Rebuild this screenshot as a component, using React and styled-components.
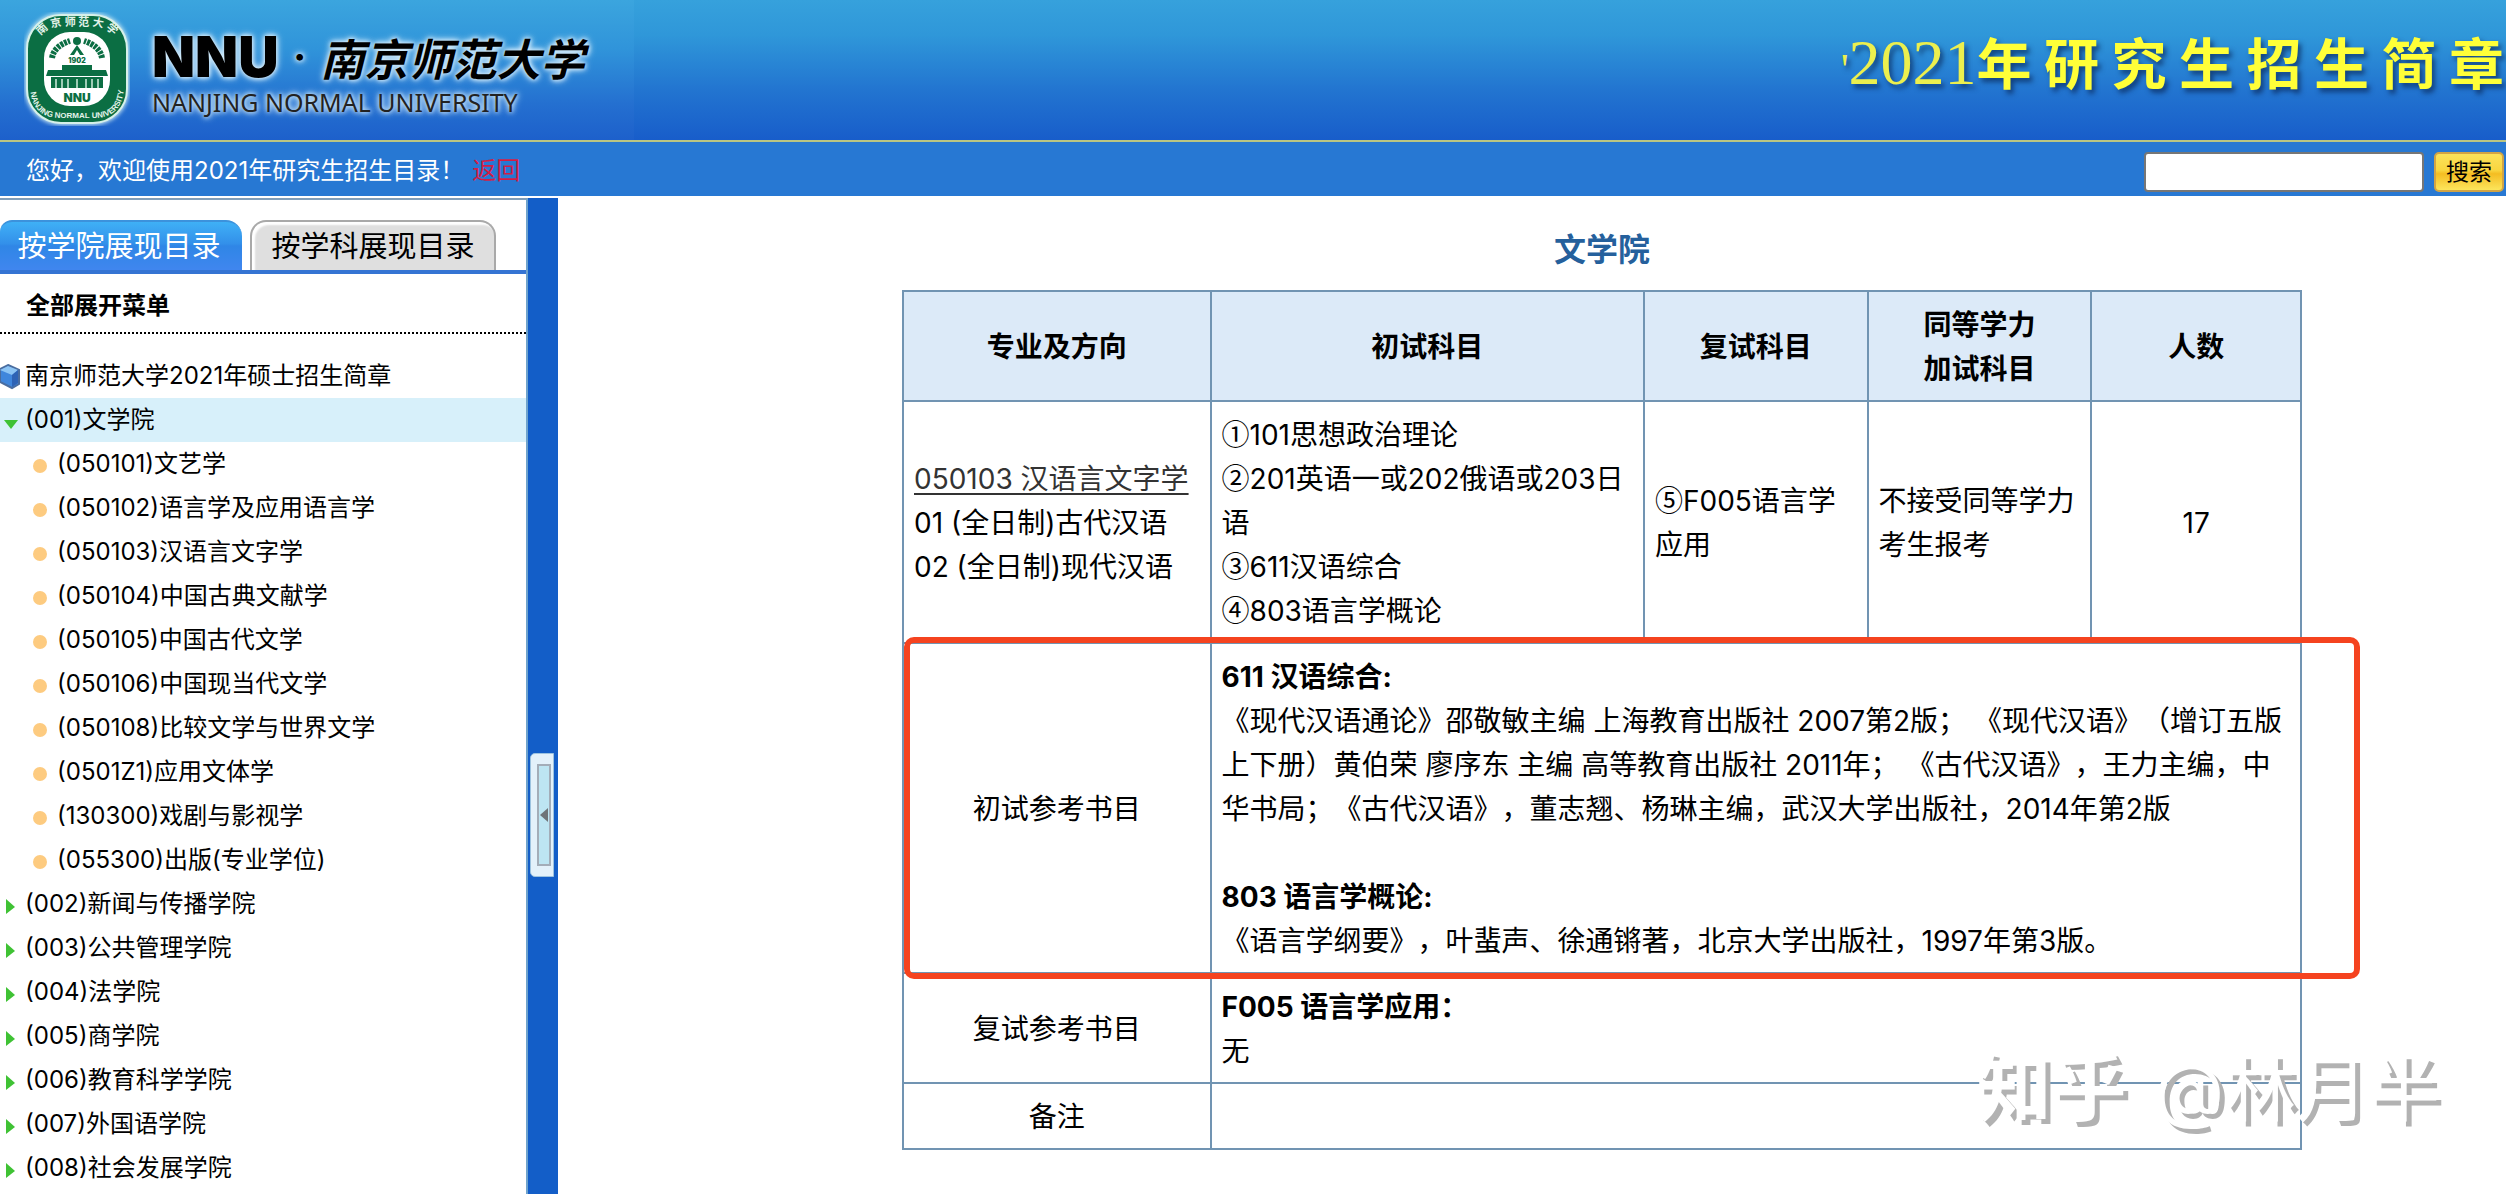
import React, { useState } from "react";
import styled, { createGlobalStyle, css } from "styled-components";

const sans = `Inter, "Noto Sans CJK SC", sans-serif`;

const Global = createGlobalStyle`
  * { box-sizing: border-box; }
  body {
    margin: 0;
    background: #fff;
    color: #000;
    font-family: ${sans};
    font-size: 24px;
    text-spacing-trim: space-all;
  }
`;

const Page = styled.div`
  height: 100vh;
  display: flex;
  flex-direction: column;
  overflow: hidden;
`;

const Banner = styled.header`
  flex: none;
  height: 142px;
  display: flex;
  justify-content: space-between;
  align-items: flex-start;
  background: linear-gradient(#36a1dc, #2f97d9 25%, #2274d0 65%, #185dca);
  border-bottom: 2px solid #b9c583;
`;

const Brand = styled.div`
  width: 634px;
  height: 140px;
  padding: 12px 0 0 24px;
  display: flex;
  gap: 22px;
  background: linear-gradient(#3ba5de, #3094da 35%, #246fd0 75%, #1d60cb);
`;

const BrandText = styled.div`
  padding-top: 12px;
  white-space: nowrap;
  text-shadow: 0 0 4px #d5ecfb, 0 0 6px #d5ecfb, 0 0 8px #a9d5f3;
`;

const BrandMain = styled.div`
  display: flex;
  align-items: center;
  height: 66px;
  line-height: 66px;
`;

const Initials = styled.span`
  font: 900 56px/66px Inter, sans-serif;
`;

const Separator = styled.span`
  width: 42px;
  text-align: center;
  font-size: 40px;
  font-weight: bold;
`;

const ChineseName = styled.span`
  font: italic bold 44px/66px "Noto Sans CJK SC", sans-serif;
`;

const EnglishName = styled.div`
  font: 400 25px/24px "Noto Sans", sans-serif;
  color: #222;
`;

const BannerTitle = styled.h1`
  margin: 0;
  padding: 20px 2px 0 0;
  display: flex;
  align-items: baseline;
  color: #ffff38;
  font: bold 55px/80px "Noto Sans CJK SC", sans-serif;
  white-space: nowrap;
  text-shadow: 3px 4px 5px rgba(10, 40, 90, 0.7);
`;

const Year = styled.span`
  font: 400 64px/80px "Liberation Serif", serif;
  color: #ecef4e;
`;

const Tick = styled.span`
  font-size: 44px;
`;

const Toolbar = styled.div`
  flex: none;
  height: 54px;
  padding: 0 2px 2px 26px;
  display: flex;
  align-items: center;
  justify-content: space-between;
  background: #2778d3;
  color: #fff;
`;

const BackLink = styled.a`
  margin-left: 8px;
  color: #d31c46;
  text-decoration: none;
`;

const SearchForm = styled.form`
  display: flex;
  align-items: center;
  gap: 10px;
  padding-top: 8px;
`;

const SearchInput = styled.input`
  width: 280px;
  height: 40px;
  padding: 0 8px;
  border: 2px solid #767676;
  border-radius: 4px;
  background: #fff;
  font: 24px ${sans};
`;

const SearchButton = styled.button`
  width: 70px;
  height: 40px;
  padding: 0;
  border: 2px solid #d2a444;
  border-radius: 5px;
  background: linear-gradient(#fbe25a, #f9d640 45%, #f4bd22 55%, #fce55c);
  color: #000;
  font: 23px/30px ${sans};
`;

const Body = styled.div`
  flex: 1;
  min-height: 0;
  display: flex;
  padding-top: 2px;
`;

const Sidebar = styled.nav`
  flex: none;
  width: 528px;
  overflow: hidden;
  border-top: 2px solid #7f9db9;
  border-right: 2px solid #6fa3cd;
`;

const Tabs = styled.div`
  display: flex;
  gap: 8px;
  padding-top: 20px;
  border-bottom: 4px solid #3574d3;
`;

const Tab = styled.button`
  height: 50px;
  padding: 2px 0 0;
  font: 29px/46px ${sans};
  border: 0;
  ${({ $active }) =>
    $active
      ? css`
          width: 242px;
          padding-right: 4px;
          border-radius: 12px 16px 0 0;
          border-top: 2px solid #3c92dc;
          background: linear-gradient(#3fb0f6, #3390ea 45%, #2f86e6 50%, #4086ef);
          color: #fff;
        `
      : css`
          width: 246px;
          border: 2px solid #a9a9a9;
          border-bottom: 0;
          border-radius: 16px 16px 0 0;
          background: #dfdfdf;
          box-shadow: inset 3px 3px 2px #fff;
          color: #000;
        `}
`;

const ExpandAll = styled.button`
  display: block;
  width: 100%;
  height: 60px;
  padding: 6px 0 0 26px;
  border: 0;
  border-bottom: 2px dotted #000;
  background: none;
  font: bold 24px/44px ${sans};
  text-align: left;
`;

const Tree = styled.ul`
  margin: 0;
  padding: ${({ $nested }) => ($nested ? "0" : "20px 0 0")};
  list-style: none;
`;

const Node = styled.a`
  display: flex;
  align-items: center;
  height: 44px;
  padding-left: ${({ $nested }) => ($nested ? "32px" : "0")};
  background: ${({ $active }) => ($active ? "#d7f0fa" : "transparent")};
  color: #000;
  line-height: 44px;
  text-decoration: none;
  white-space: nowrap;
`;

const Marker = styled.svg`
  flex: none;
  width: 25px;
  height: 44px;
`;

const Divider = styled.div`
  flex: none;
  width: 30px;
  padding: 555px 0 0 2px;
  background: #135ec8;
`;

const Handle = styled.button`
  width: 24px;
  height: 124px;
  padding: 10px 2px 10px 6px;
  display: flex;
  border: 1px solid #9cc3e0;
  border-radius: 5px 0 0 5px;
  background: #e3f1fa;
`;

const Grip = styled.span`
  flex: 1;
  align-self: stretch;
  display: flex;
  align-items: center;
  justify-content: center;
  border: 2px solid #a3adb8;
  background: #bde5f2;
`;

const Main = styled.main`
  flex: 1;
  min-width: 0;
  padding: 22px 0 0 140px;
  display: flex;
  flex-direction: column;
  align-items: center;
`;

const Heading = styled.h2`
  margin: 0 0 10px;
  color: #25609c;
  font: bold 32px/60px ${sans};
`;

const TableFrame = styled.div`
  position: relative;
  width: 1400px;
  max-width: 100%;
`;

const Table = styled.table`
  width: 100%;
  table-layout: fixed;
  border-collapse: collapse;
  font-size: 28px;
  line-height: 44px;
`;

const cell = css`
  padding: 11px 10px 9px;
  border: 2px solid #7194b2;
  white-space: nowrap;
`;

const Th = styled.th`
  ${cell}
  background: #dceaf8;
  font-weight: bold;
`;

const Td = styled.td`
  ${cell}
  text-align: ${({ $center }) => ($center ? "center" : "left")};
  height: 66px;
`;

const Circled = styled.span`
  font-family: "Noto Sans CJK SC", sans-serif;
  line-height: 1;
`;

const MajorLink = styled.a`
  color: #333;
  text-decoration: underline;
  text-decoration-thickness: 2px;
  text-underline-offset: 4px;
`;

const Highlight = styled.div`
  position: absolute;
  left: 2px;
  top: 347px;
  width: 1456px;
  height: 342px;
  border: 6px solid #f5431f;
  border-radius: 10px;
  pointer-events: none;
`;

const Watermark = styled.div`
  position: absolute;
  right: 66px;
  bottom: 55px;
  display: flex;
  align-items: baseline;
  gap: 28px;
  color: #fff;
  font: 72px/100px ${sans};
  text-shadow: 5px 5px 0 #b2b2b2;
  white-space: nowrap;
`;

const WatermarkLogo = styled.span`
  font-size: 75px;
  font-weight: bold;
`;

const children = [
  "(050101)文艺学",
  "(050102)语言学及应用语言学",
  "(050103)汉语言文字学",
  "(050104)中国古典文献学",
  "(050105)中国古代文学",
  "(050106)中国现当代文学",
  "(050108)比较文学与世界文学",
  "(0501Z1)应用文体学",
  "(130300)戏剧与影视学",
  "(055300)出版(专业学位)",
];

const colleges = [
  "(002)新闻与传播学院",
  "(003)公共管理学院",
  "(004)法学院",
  "(005)商学院",
  "(006)教育科学学院",
  "(007)外国语学院",
  "(008)社会发展学院",
];

const Emblem = () => (
  <svg width="106" height="114" viewBox="0 0 106 114" aria-hidden="true">
    <defs>
      <path id="arcTop" d="M13 50V40Q13 14 40 14H66Q93 14 93 40V50" />
      <path id="arcBottom" d="M6 54V72Q6 106 36 106H70Q100 106 100 72V52" />
      <filter id="glow" x="-20%" y="-20%" width="140%" height="140%">
        <feGaussianBlur stdDeviation="2" />
      </filter>
    </defs>
    <rect x="1" y="1" width="104" height="112" rx="36" fill="#cdeaf3" filter="url(#glow)" />
    <rect x="3" y="3" width="100" height="108" rx="34" fill="#0b6e43" stroke="#d6f0ea" strokeWidth="2" />
    <rect x="20" y="20" width="66" height="74" rx="26" fill="#fff" />
    <g fill="#e3f3ea" fontFamily="Noto Sans CJK SC, sans-serif" fontWeight="bold">
      <text fontSize="11">
        <textPath href="#arcTop" startOffset="50%" textAnchor="middle">南 京 师 范 大 学</textPath>
      </text>
      <text fontSize="8" fontFamily="Liberation Sans, sans-serif">
        <textPath href="#arcBottom" startOffset="50%" textAnchor="middle">NANJING NORMAL UNIVERSITY</textPath>
      </text>
    </g>
    <g fill="#0b6e43">
      <circle cx="53" cy="29" r="4" />
      <path d="M53 33l7 10h-4l-3-5-3 5h-4z" />
      <path d="M38 58V53h30v5zM24 58h58l2 6H22zM27 65h52v11H27z" />
    </g>
    <path d="M28 46q2-12 18-17M78 46q-2-12-18-17" stroke="#0b6e43" strokeWidth="6" strokeDasharray="3 1" fill="none" />
    <path d="M32 67v9M38 67v9M44 67v9M53 67v9M62 67v9M68 67v9M74 67v9" stroke="#9fcdb6" strokeWidth="2" />
    <g fill="#0b6e43" fontWeight="900" textAnchor="middle" fontFamily="Inter, sans-serif">
      <text x="53" y="51" fontSize="7">1902</text>
      <text x="53" y="90" fontSize="12">NNU</text>
    </g>
  </svg>
);

const Cube = () => (
  <Marker viewBox="0 0 25 44">
    <path d="M8 11l11 5v14l-7 4L0 28V15z" fill="#3f86dc" stroke="#4a6d9f" strokeWidth="2" />
    <path d="M8 12l10 4-6 5L0 16z" fill="#8cc4f4" />
    <path d="M12 21l6-5v13l-6 4z" fill="#2e63b5" />
  </Marker>
);

const Arrow = ({ open }) => (
  <Marker viewBox="0 0 25 44">
    <path d={open ? "M4 22h14l-7 9z" : "M6 17v15l9-7z"} fill="#3fc234" />
  </Marker>
);

const Dot = () => (
  <Marker viewBox="0 0 25 44">
    <circle cx="8" cy="24" r="7" fill="#fdcb80" />
  </Marker>
);

export default function App() {
  const [open, setOpen] = useState(true);
  const [tab, setTab] = useState(0);
  const [query, setQuery] = useState("");

  return (
    <Page>
      <Global />
      <Banner>
        <Brand>
          <Emblem />
          <BrandText>
            <BrandMain>
              <Initials>NNU</Initials>
              <Separator>·</Separator>
              <ChineseName>南京师范大学</ChineseName>
            </BrandMain>
            <EnglishName>NANJING NORMAL UNIVERSITY</EnglishName>
          </BrandText>
        </Brand>
        <BannerTitle>
          <Year>
            <Tick>'</Tick>2021
          </Year>
          年 研 究 生 招 生 简 章
        </BannerTitle>
      </Banner>
      <Toolbar>
        <span>
          您好，欢迎使用2021年研究生招生目录！<BackLink href="#back">返回</BackLink>
        </span>
        <SearchForm onSubmit={(e) => e.preventDefault()}>
          <SearchInput
            type="text"
            aria-label="搜索"
            value={query}
            onChange={(e) => setQuery(e.target.value)}
          />
          <SearchButton type="submit">搜索</SearchButton>
        </SearchForm>
      </Toolbar>
      <Body>
        <Sidebar>
          <Tabs>
            {["按学院展现目录", "按学科展现目录"].map((name, i) => (
              <Tab key={name} type="button" $active={tab === i} onClick={() => setTab(i)}>
                {name}
              </Tab>
            ))}
          </Tabs>
          <ExpandAll type="button" onClick={() => setOpen(true)}>
            全部展开菜单
          </ExpandAll>
          <Tree>
            <li>
              <Node href="#guide">
                <Cube />
                南京师范大学2021年硕士招生简章
              </Node>
            </li>
            <li>
              <Node href="#001" $active onClick={() => setOpen(!open)}>
                <Arrow open={open} />
                (001)文学院
              </Node>
              {open && (
                <Tree $nested>
                  {children.map((name) => (
                    <li key={name}>
                      <Node href="#major" $nested>
                        <Dot />
                        {name}
                      </Node>
                    </li>
                  ))}
                </Tree>
              )}
            </li>
            {colleges.map((name) => (
              <li key={name}>
                <Node href="#college">
                  <Arrow />
                  {name}
                </Node>
              </li>
            ))}
          </Tree>
        </Sidebar>
        <Divider>
          <Handle type="button" aria-label="收起">
            <Grip>
              <svg width="8" height="14" viewBox="0 0 8 14">
                <path d="M8 0v14L0 7z" fill="#6f7478" />
              </svg>
            </Grip>
          </Handle>
        </Divider>
        <Main>
          <Heading>文学院</Heading>
          <TableFrame>
            <Table>
              <colgroup>
                <col width="22%" />
                <col width="31%" />
                <col width="16%" />
                <col width="16%" />
                <col width="15%" />
              </colgroup>
              <thead>
                <tr>
                  <Th>专业及方向</Th>
                  <Th>初试科目</Th>
                  <Th>复试科目</Th>
                  <Th>
                    同等学力
                    <br />
                    加试科目
                  </Th>
                  <Th>人数</Th>
                </tr>
              </thead>
              <tbody>
                <tr>
                  <Td>
                    <MajorLink href="#050103">050103 汉语言文字学</MajorLink>
                    <br />
                    01 (全日制)古代汉语
                    <br />
                    02 (全日制)现代汉语
                  </Td>
                  <Td>
                    <Circled>①</Circled>101思想政治理论
                    <br />
                    <Circled>②</Circled>201英语一或202俄语或203日
                    <br />
                    语
                    <br />
                    <Circled>③</Circled>611汉语综合
                    <br />
                    <Circled>④</Circled>803语言学概论
                  </Td>
                  <Td>
                    <Circled>⑤</Circled>F005语言学
                    <br />
                    应用
                  </Td>
                  <Td>
                    不接受同等学力
                    <br />
                    考生报考
                  </Td>
                  <Td $center>17</Td>
                </tr>
                <tr>
                  <Td $center>初试参考书目</Td>
                  <Td colSpan={4}>
                    <b>611 汉语综合:</b>
                    <br />
                    《现代汉语通论》邵敬敏主编 上海教育出版社 2007第2版； 《现代汉语》（增订五版
                    <br />
                    上下册）黄伯荣 廖序东 主编 高等教育出版社 2011年； 《古代汉语》，王力主编，中
                    <br />
                    华书局；《古代汉语》，董志翘、杨琳主编，武汉大学出版社，2014年第2版
                    <br />
                    <br />
                    <b>803 语言学概论:</b>
                    <br />
                    《语言学纲要》，叶蜚声、徐通锵著，北京大学出版社，1997年第3版。
                  </Td>
                </tr>
                <tr>
                  <Td $center>复试参考书目</Td>
                  <Td colSpan={4}>
                    <b>F005 语言学应用：</b>
                    <br />无
                  </Td>
                </tr>
                <tr>
                  <Td $center>备注</Td>
                  <Td colSpan={4} />
                </tr>
              </tbody>
            </Table>
            <Highlight />
          </TableFrame>
        </Main>
      </Body>
      <Watermark>
        <WatermarkLogo>知乎</WatermarkLogo>
        <span>@林月半</span>
      </Watermark>
    </Page>
  );
}
